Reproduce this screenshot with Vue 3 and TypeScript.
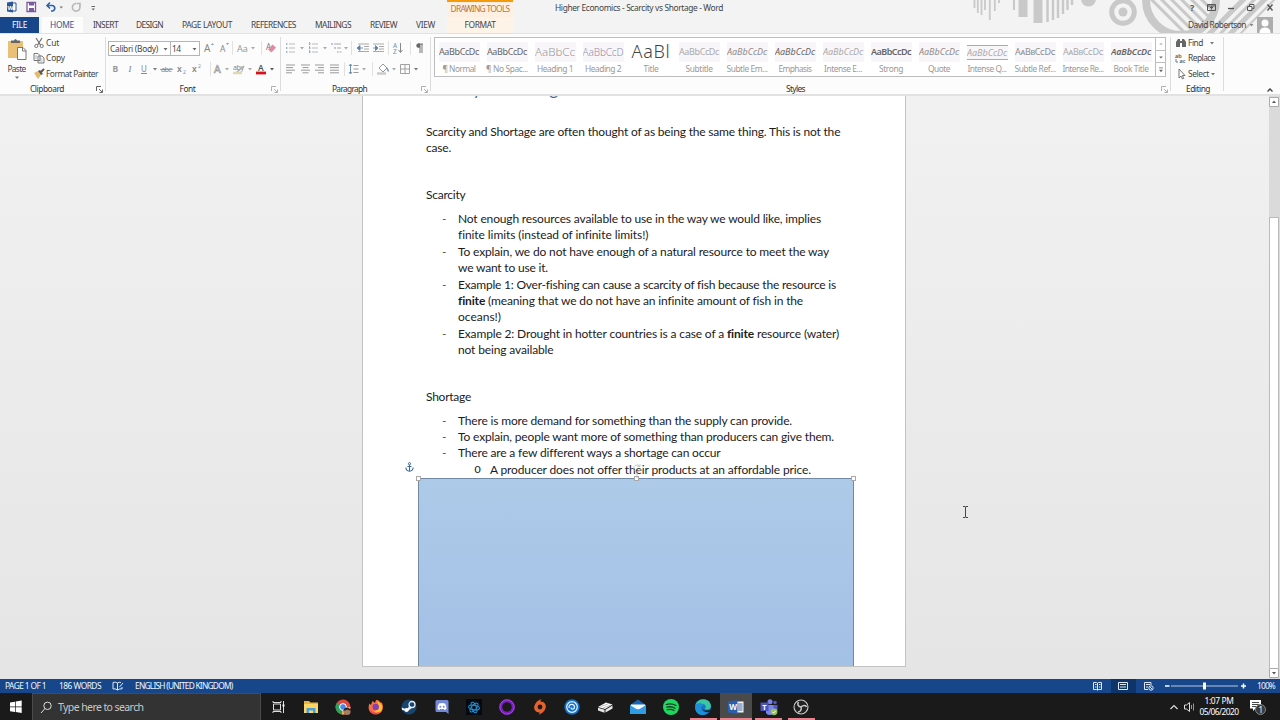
<script setup lang="ts">
// Word window: quick access bar, ribbon, document page, status bar and the desktop taskbar.
interface Cell { w: number; art: string }
interface Line { text: string; w: number }
interface Block { kind: 'para' | 'dash' | 'circle'; gap: number; lines: Line[] }

// Spreads a run of text over a fixed number of pixels through letter-spacing.
const vFit = {
  mounted(el: HTMLElement, { value }: { value: number }) {
    const count = (el.textContent || '').length
    const natural = el.getBoundingClientRect().width
    if (count) el.style.letterSpacing = `${(value - natural) / count}px`
  },
}

const arrow = (x: number, y = 7, c = '#777') => `<path d="M${x - 2} ${y - 1}h4l-2 2.4z" fill="${c}"/>`
const rows = (x: number, ws: number[], y = 3, c = '#999') =>
  ws.map((w, i) => `<path d="M${x} ${y + i * 2.6}h${w}" stroke="${c}"/>`).join('')
const sep = (x: number) => `<path d="M${x}.5 0v14" stroke="#e1e1e1"/>`

const tabs = [
  { name: 'FILE', w: 39, t: 15, cls: 'file' },
  { name: 'HOME', w: 46, t: 24, cls: 'active' },
  { name: 'INSERT', w: 41, t: 25, cls: '' },
  { name: 'DESIGN', w: 47, t: 27, cls: '' },
  { name: 'PAGE LAYOUT', w: 68, t: 50, cls: '' },
  { name: 'REFERENCES', w: 65, t: 45, cls: '' },
  { name: 'MAILINGS', w: 54, t: 36, cls: '' },
  { name: 'REVIEW', w: 47, t: 27, cls: '' },
  { name: 'VIEW', w: 37, t: 19, cls: '' },
]

const clipboard = [
  { name: 'Cut', w: 13, art: '<path d="M3 1l4.500 7M9 1L4.500 8" stroke="#666" stroke-width="1.1"/><circle cx="3.300" cy="9" r="1.600" stroke="#777"/><circle cx="8.700" cy="9" r="1.600" stroke="#777"/>' },
  { name: 'Copy', w: 19, art: '<path d="M1 1.500h4l2 2v5H1zM5 4h4l2 2v5H5z" fill="#fff" stroke="#777"/><path d="M6.500 7h3M6.500 9h3M2 4h2M2 6h2" stroke="#8a9db5" stroke-width=".8"/>' },
  { name: 'Format Painter', w: 52, art: '<path d="M1 5l4-2 3 4-3 4z" fill="#e4b969"/><path d="M5 3l2-1 3 4-2 1z" fill="#555"/><path d="M8 4l3-3" stroke="#555" stroke-width="2"/>' },
]

const fontTop: Cell[] = [
  { w: 14, art: '<text x="2" y="11" font-size="10" fill="#888">A</text><path d="M9 4l1.500-2L12 4z" fill="#7d9cc2"/>' },
  { w: 16, art: '<text x="4" y="11" font-size="8.500" fill="#888">A</text><path d="M10 2h3l-1.500 2z" fill="#7d9cc2"/>' },
  { w: 29, art: sep(0) + '<text x="5" y="10.500" font-size="9" fill="#999">Aa</text>' + arrow(21, 7, '#aaa') },
  { w: 20, art: sep(0) + '<text x="5" y="9" font-size="8" fill="#777">A</text><path d="M7 8.500l4.500-5 3.500 3-4.500 5z" fill="#e08ba5"/>' },
]
const fontBottom: Cell[] = [
  { w: 15, art: '<text x="4.500" y="10" font-size="8.500" font-weight="700" fill="#999">B</text>' },
  { w: 14, art: '<text x="5.500" y="10" font-size="8.500" font-style="italic" font-family="Liberation Serif, serif" fill="#777">I</text>' },
  { w: 23, art: '<text x="4" y="9.500" font-size="8" fill="#888">U</text><path d="M4 11.500h6" stroke="#888"/>' + arrow(18) },
  { w: 16, art: '<text x="1" y="10" font-size="7.500" textLength="11" fill="#888">abc</text><path d="M0 7.500h13" stroke="#888" stroke-width=".8"/>' },
  { w: 15, art: '<text x="1" y="10" font-size="8.500" font-weight="600" fill="#888">x</text><text x="7" y="12" font-size="5" fill="#6d8fb8">2</text>' },
  { w: 18, art: '<text x="1" y="10" font-size="8.500" font-weight="600" fill="#888">x</text><text x="7" y="6" font-size="5" fill="#6d8fb8">2</text>' },
  { w: 23, art: sep(1) + '<text x="5" y="11" font-size="10.500" fill="#fff" stroke="#999" stroke-width=".7">A</text>' + arrow(18, 7, '#aaa') },
  { w: 23, art: '<text x="1" y="8" font-size="7" textLength="11" fill="#888">aby</text><path d="M5 10l7-6" stroke="#aaa" stroke-width="1.500"/><path d="M1 11h9" stroke="#ddd8b8" stroke-width="2.500"/>' + arrow(18, 7, '#aaa') },
  { w: 22, art: '<text x="3" y="9" font-size="8.500" font-weight="600" fill="#555">A</text><path d="M1 11h10" stroke="#d8121c" stroke-width="2.800"/>' + arrow(17, 7, '#555') },
]
const bullets = (c: string) => [3, 7, 11].map((y) => `<path d="M1 ${y}h1.500" stroke="${c}" stroke-width="1.500"/><path d="M4 ${y}h6" stroke="#bbb"/>`).join('')
const paraTop: Cell[] = [
  { w: 23, art: bullets('#8aa4c6') + arrow(17, 7, '#aaa') },
  { w: 22, art: bullets('#7b96bb') + '<path d="M1.500 1v12" stroke="#9db0cb" stroke-dasharray="2 2"/>' + arrow(17, 7, '#aaa') },
  { w: 26, art: '<path d="M1 3h2M4 7h2M7 11h1.500" stroke="#7b96bb"/><path d="M4 3h7M7 7h4M9.500 11h2" stroke="#aaa"/>' + arrow(16, 7, '#aaa') + sep(21) },
  { w: 16, art: '<path d="M2 3h11M8 5.500h5M8 8h5M2 10.500h11" stroke="#aaa"/><path d="M1 7l3-2.500v5zM4 7h3" fill="#5d7fa8" stroke="#5d7fa8" stroke-width=".8"/>' },
  { w: 20, art: '<path d="M1 3h11M7 5.500h5M7 8h5M1 10.500h11" stroke="#aaa"/><path d="M6 7L3.500 4.500v5zM1 7h3" fill="#5d7fa8" stroke="#5d7fa8" stroke-width=".8"/>' + sep(16) },
  { w: 22, art: '<text x="1" y="6.500" font-size="6.500" fill="#7390b5">A</text><text x="1" y="13" font-size="6.500" fill="#888">Z</text><path d="M8.500 2v9M6.500 9l2 2.500 2-2.500" stroke="#888"/>' + sep(18) },
  { w: 12, art: '<path d="M8 3v9M6 3v9M4 3H9" stroke="#666" stroke-width=".9"/><path d="M6 2.600H4.300a2 2.100 0 0 0 0 4.200H6z" fill="#666"/>' },
]
const paraBottom: Cell[] = [
  { w: 15, art: rows(1, [9, 7, 9, 6]) },
  { w: 14, art: '<path d="M1 3h9M2.500 5.600h6M1 8.200h9M2.500 10.800h6" stroke="#999"/>' },
  { w: 15, art: '<path d="M1 3h9M4 5.600h6M1 8.200h9M4 10.800h6" stroke="#999"/>' },
  { w: 19, art: rows(1, [9, 9, 9, 9]) + sep(15) },
  { w: 29, art: '<path d="M2.500 2v10M1 4l1.500-2L4 4M1 10l1.500 2L4 10" stroke="#6d8fb8"/><path d="M5.500 3.500h5M5.500 7h5M5.500 10.500h5" stroke="#999"/>' + arrow(16, 7, '#aaa') + sep(24) },
  { w: 22, art: '<path d="M2 6l4-4 4 4-4 4z" fill="#fff" stroke="#999"/><path d="M10 6l1.500 3.500" stroke="#7a95b8" stroke-width="1.500"/><path d="M0 11.500h9" stroke="#ccc" stroke-width="2.500"/>' + arrow(17, 7, '#aaa') },
  { w: 22, art: '<path d="M1.500 2.500h9v9h-9zM6 2.500v9M1.500 7h9" stroke="#999" stroke-width=".9"/>' + arrow(17) },
]

const styles = [
  { name: '¶ Normal', cls: 'dark', w: 33 },
  { name: '¶ No Spac...', cls: 'dark', w: 42 },
  { name: 'Heading 1', cls: 'h1', w: 36 },
  { name: 'Heading 2', cls: 'h2', w: 36 },
  { name: 'Title', cls: 'title', w: 15 },
  { name: 'Subtitle', cls: 'light', w: 27 },
  { name: 'Subtle Em...', cls: 'it', w: 41 },
  { name: 'Emphasis', cls: 'it dark', w: 33 },
  { name: 'Intense E...', cls: 'it light', w: 38 },
  { name: 'Strong', cls: 'strong', w: 24 },
  { name: 'Quote', cls: 'it', w: 22 },
  { name: 'Intense Q...', cls: 'it light ruled', w: 39 },
  { name: 'Subtle Ref...', cls: 'caps', w: 41 },
  { name: 'Intense Re...', cls: 'caps light', w: 41 },
  { name: 'Book Title', cls: 'it strong', w: 35 },
]
const sampleOf = (cls: string) => {
  if (cls === 'title') return { text: 'AaBl', w: 39 }
  if (cls === 'h1') return { text: 'AaBbCc', w: 40 }
  if (cls === 'h2') return { text: 'AaBbCcD', w: 41 }
  return { text: 'AaBbCcDc', w: 40 }
}

const editing = [
  { name: 'Find', w: 15, more: 8, art: '<path d="M1 10V5l2-3h2v8zM7 10V2h2l2 3v5z" fill="#666"/><path d="M4 5h4" stroke="#666" stroke-width="2"/>' },
  { name: 'Replace', w: 27, more: 0, art: '<text x="0" y="5.500" font-size="5.500" font-weight="600" fill="#555">ab</text><text x="4.500" y="11" font-size="5.500" font-weight="600" fill="#555">ac</text><path d="M1 7v3h2" stroke="#5a7fae"/>' },
  { name: 'Select', w: 21, more: 3, art: '<path d="M4 1v9l2-2 1.500 3 1.200-.6L7.300 7.500H10z" fill="#fff" stroke="#666" stroke-width=".9"/>' },
]

const blocks: Block[] = [
  { kind: 'para', gap: 24, lines: [{ text: 'Scarcity and Shortage are often thought of as being the same thing. This is not the', w: 414 }, { text: 'case.', w: 25 }] },
  { kind: 'para', gap: 30.5, lines: [{ text: 'Scarcity', w: 39.5 }] },
  { kind: 'dash', gap: 7, lines: [{ text: 'Not enough resources available to use in the way we would like, implies', w: 363 }, { text: 'finite limits (instead of infinite limits!)', w: 190 }] },
  { kind: 'dash', gap: 0, lines: [{ text: 'To explain, we do not have enough of a natural resource to meet the way', w: 371 }, { text: 'we want to use it.', w: 90 }] },
  { kind: 'dash', gap: 0, lines: [{ text: 'Example 1: Over-fishing can cause a scarcity of fish because the resource is', w: 377.5 }, { text: '*finite* (meaning that we do not have an infinite amount of fish in the', w: 344.5 }, { text: 'oceans!)', w: 43 }] },
  { kind: 'dash', gap: 0, lines: [{ text: 'Example 2: Drought in hotter countries is a case of a *finite* resource (water)', w: 380.5 }, { text: 'not being available', w: 95.5 }] },
  { kind: 'para', gap: 30.4, lines: [{ text: 'Shortage', w: 45 }] },
  { kind: 'dash', gap: 7, lines: [{ text: 'There is more demand for something than the supply can provide.', w: 334 }] },
  { kind: 'dash', gap: 0, lines: [{ text: 'To explain, people want more of something than producers can give them.', w: 376 }] },
  { kind: 'dash', gap: 0, lines: [{ text: 'There are a few different ways a shortage can occur', w: 262 }] },
  { kind: 'circle', gap: 0, lines: [{ text: 'A producer does not offer their products at an affordable price.', w: 320 }] },
]

const apps = [
  { name: 'taskview', cls: '', art: '<path d="M3.500 5h7v6h-7zM3 2v1.500h8V2M3 14v-1.500h8V14M13.500 2v12" stroke="#ddd"/><path d="M12.500 6.500h2" stroke="#fff" stroke-width="2"/>' },
  { name: 'explorer', cls: '', art: '<path d="M1 2h5l1.500 1.500H15V14H1z" fill="#e9b53c"/><path d="M1 5h14v9H1z" fill="#fbd667"/><path d="M3.500 14V9h9v5h-2.500v-2.500H6V14z" fill="#4a9fd8"/>' },
  { name: 'chrome', cls: '', art: '<circle cx="8" cy="8" r="7.500" fill="#dd4b3e"/><path d="M8 8L1.500 4.300A7.500 7.500 0 0 0 7 15.400z" fill="#2ba25a"/><path d="M8 8h7.500A7.500 7.500 0 0 1 7 15.400z" fill="#f4c63d"/><circle cx="8" cy="8" r="3.400" fill="#4787ec" stroke="#fff"/><circle cx="12" cy="12.500" r="3.600" fill="#a77c62"/><path d="M8.400 12q.500-3.600 3.600-3.600t3.600 3.600l-3-1.500z" fill="#2d211c"/>' },
  { name: 'firefox', cls: '', art: '<path d="M8 1c3 0 4 2 4 2l2 1c2 4 1 11-6 11.500C2 15.500-1 10 1.500 4.500L3 6l1.500-4L7 4z" fill="#ff7139"/><path d="M9 .500c1 4 7 4 5 10-1.500 4-6 4-8 2l5-4z" fill="#ffbd30"/><circle cx="7.700" cy="8" r="3.200" fill="#8540b5"/><path d="M.800 7c1 7 8 8.500 12.200 5-4 5-11 4-12.200-5z" fill="#f72e62"/>' },
  { name: 'steam', cls: '', art: '<circle cx="8" cy="8" r="7.500" fill="#17456f"/><path d="M.700 8.500l5 2L9 6l3 2-5 4-6-1z" fill="#e8eef5"/><circle cx="11" cy="5.500" r="3" fill="#17456f" stroke="#e8eef5" stroke-width="1.300"/><circle cx="5.500" cy="11" r="2.100" fill="#fff"/>' },
  { name: 'discord', cls: '', art: '<path d="M3 1h10a1.500 1.500 0 0 1 1.500 1.500V15L12 13H3a1.500 1.500 0 0 1-1.500-1.500v-9A1.500 1.500 0 0 1 3 1z" fill="#7289da"/><path d="M5 4.500q3-1 6 0 2 3 1.500 5.500L10.500 11l-.7-1H6.200l-.7 1-2-1Q3 7.500 5 4.500z" fill="#fff"/><circle cx="6.300" cy="7.700" r="1" fill="#7289da"/><circle cx="9.700" cy="7.700" r="1" fill="#7289da"/>' },
  { name: 'battlenet', cls: '', art: '<path d="M0 0h16v16H0z" fill="#050a12"/><g stroke="#2493d6" stroke-width="1"><ellipse cx="8" cy="8.500" rx="5.500" ry="2.300" transform="rotate(10 8 8.500)"/><ellipse cx="8" cy="8.500" rx="5.500" ry="2.300" transform="rotate(70 8 8.500)"/><ellipse cx="8" cy="8.500" rx="5.500" ry="2.300" transform="rotate(130 8 8.500)"/></g>' },
  { name: 'ring', cls: '', art: '<circle cx="8" cy="8" r="6.300" stroke="#7b1fc2" stroke-width="3"/><circle cx="8" cy="8" r="7.200" stroke="#b453e8" stroke-width=".7"/>' },
  { name: 'origin', cls: '', art: '<path d="M9.500 0C8.500 1 8.300 2 8.500 2.600c4 0 6.300 3.600 5 7-1.200 3.400-4 5.200-7 6.400 1-1 1.200-2 1-2.600-4 0-6.300-3.600-5-7C3.700 3 6.500 1.200 9.500 0z" fill="#e9622b"/><circle cx="8" cy="8" r="2.400" fill="#1b1b1c"/>' },
  { name: 'uplay', cls: '', art: '<circle cx="8" cy="8" r="7.700" fill="#1170c8"/><circle cx="8" cy="8" r="5.300" stroke="#e9f5ff" stroke-width="1.200"/><path d="M5 9c-.5-5 5.500-4.500 5.500-1 0 2.500-3.500 3-3.500.5" stroke="#e9f5ff" stroke-width="1.200"/>' },
  { name: 'box', cls: '', art: '<path d="M1 8l8-4.500 6.500 2L8 10z" fill="#fff"/><path d="M1 8.700l6.500 2v3L1 11.500zM8.500 10.700L15.500 6.500v3l-7 4z" fill="#e5e5e5"/><path d="M3.500 7.700l8-3M6 9l8-3" stroke="#777" stroke-width=".5"/>' },
  { name: 'mail', cls: '', art: '<path d="M0 6l8-5.500L16 6v9H0z" fill="#1565b5"/><path d="M1 5.500h14v5H1z" fill="#f5f9ff"/><path d="M0 6l8 5 8-5v9H0z" fill="#2f9ce6"/>' },
  { name: 'spotify', cls: '', art: '<circle cx="8" cy="8" r="8" fill="#1ed760"/><path d="M3.300 5.500q5-1.500 9.700 1M3.800 8.200q4.500-1.200 8.200 1M4.300 10.700q4-.9 6.700.8" stroke="#17351f" stroke-width="1.300" stroke-linecap="round"/>' },
  { name: 'edge', cls: 'running', art: '<circle cx="8" cy="8" r="8" fill="#1a76c8"/><path d="M.500 6C2-1 15-2 16 7c0 3-3 4-6 3 2-3 0-5-3-5S1 6 .500 6z" fill="#3ac6a3"/><path d="M.200 7C2 3 8 3 8.500 6.500 5 7 5 13 11 13.500q2 0 3-.700C9 19-1 16 .200 7z" fill="#1b8fd8"/><path d="M8 7c-2 4 3 6 7.500 3.500L14 13c-5 1-8-3-6-6z" fill="#12202c"/>' },
  { name: 'word', cls: 'running current', art: '<path d="M8 2.500h7.500v11H8z" fill="#f2f6fc"/><path d="M10 5h4.500M10 7h4.500M10 9h4.500M10 11h4.500" stroke="#2b579a" stroke-width=".9"/><path d="M0 2.500L9.500 1v14L0 13.500z" fill="#2b5eae"/><text x="1.200" y="10.800" font-size="8" font-weight="700" fill="#fff">W</text>' },
  { name: 'teams', cls: 'running', art: '<circle cx="9" cy="2.800" r="2.500" fill="#7b83eb"/><circle cx="14" cy="3.500" r="1.800" fill="#5059c9"/><path d="M11 6h5.500v5a3 3 0 0 1-4 2z" fill="#5059c9"/><path d="M5 6h7.500v6a4 4 0 0 1-7.500 2z" fill="#7b83eb"/><path d="M-.500 3.500h8v8.500h-8z" fill="#4b53bc"/><text x="1.200" y="10.500" font-size="7.500" font-weight="700" fill="#fff">T</text><circle cx="13" cy="12.800" r="3.400" fill="#92c353"/><path d="M11.300 12.800l1.300 1.300 2.200-2.400" stroke="#fff"/>' },
  { name: 'obs', cls: 'running', art: '<circle cx="8" cy="8" r="7" fill="#222" stroke="#ccc" stroke-width="1.100"/><path d="M8 8C5 7.500 4 5 5.500 3M8 8c2-2 5-2 5.500 0M8 8c1 3-1 5-3 5" stroke="#ccc" stroke-width="1.500"/>' },
]
</script>

<template>
  <div class="window">
    <header class="top">
      <svg class="art" width="310" height="33" viewBox="970 0 310 33" fill="none">
        <g stroke="#c9c9c9">
          <path d="M974.500 0v8M977.800 0v13M981.500 0v15M985 0v10M989.800 0v20M994.800 0v11M999 0v3" stroke-width="1.800" />
          <path d="M1014 0v10" stroke-width="2" />
          <path d="M1023 0v17M1038 0v23" stroke-width="9" />
          <path d="M1047.500 0v22M1053 0v20M1058 0v18M1063 0v14M1067.500 0v10M1072 0v5" stroke-width="2.500" />
          <circle cx="1123" cy="12" r="11.300" stroke-width="5" />
          <circle cx="1181" cy="0" r="35" stroke-width="8" />
          <path d="M1150 -2l35 35M1158 -4l36 36M1167 -5l34 34M1177 -5l30 30M1187 -5l24 24M1197 -5l18 18" stroke-width="3" />
          <path d="M1207 36l40-40" stroke-width="5" />
          <path d="M1218 36l40-40" stroke-width="3" />
          <path d="M1228 36l40-40" stroke-width="5" />
          <path d="M1238 36l40-40" stroke-width="2" />
        </g>
        <circle cx="1088.500" cy="-1" r="7.500" fill="#c9c9c9" />
        <circle cx="1123" cy="12" r="4.500" fill="#c9c9c9" />
      </svg>

      <div class="titlebar">
        <svg class="quick" width="100" height="14" viewBox="0 0 100 14" fill="none">
          <path d="M11 3h5v8h-5z" fill="#fff" stroke="#2b579a" />
          <path d="M7 2.500L13 1.500v11L7 11.500z" fill="#2b579a" />
          <text x="7.500" y="9.500" font-size="6" font-weight="700" fill="#fff">W</text>
          <path d="M27 2.500h8.500v9H27z" fill="#fff" stroke="#7a5a9e" stroke-width="1.300" />
          <path d="M29 2.500h5v3h-5zM29 8h5v3h-5z" fill="#7a5a9e" />
          <path d="M47 5.500h5.500a2.800 2.800 0 0 1 0 5.500h-1.500M50 2.500l-3 3 3 3" stroke="#2f62a8" stroke-width="1.600" />
          <path d="M59.500 6.500h3.500l-1.750 2z" fill="#777" />
          <path d="M76 3.500a3.800 3.800 0 1 0 3.500 2M76.500 3.500H80V7" stroke="#b5b5b5" stroke-width="1.500" />
          <path d="M91.500 6.500h3.500" stroke="#666" />
          <path d="M91.500 8.500h3.500l-1.750 2z" fill="#666" />
        </svg>
        <div class="tools"><span v-fit="59">DRAWING TOOLS</span></div>
        <div class="caption"><span v-fit="168">Higher Economics - Scarcity vs Shortage - Word</span></div>
        <svg class="controls" width="92" height="15" viewBox="1188 0 92 15" fill="none" stroke="#555">
          <text x="1190" y="11" font-size="9" font-weight="700" fill="#555" stroke="none">?</text>
          <path d="M1207.500 4.500h8v6h-8zM1207.500 6h8M1211.500 9.500V6.500M1210 8l1.500-1.500L1213 8" />
          <path d="M1228 8.500h6" stroke-width="1.300" />
          <path d="M1247.500 6.500h4.500v4h-4.500zM1249.500 6V4.500h4.500v4h-1.500" />
          <path d="M1267.500 4.500l5 6M1272.500 4.500l-5 6" stroke-width="1.400" />
        </svg>
      </div>

      <nav class="tabs">
        <div v-for="t in tabs" :key="t.name" class="tab" :class="t.cls" :style="{ width: t.w + 'px' }">
          <span v-fit="t.t">{{ t.name }}</span>
        </div>
        <div class="tab format"><span v-fit="31">FORMAT</span></div>
        <div class="account">
          <span v-fit="58">David Robertson</span>
          <svg width="7" height="8" viewBox="0 0 7 8"><path d="M1.500 3h4l-2 2.400z" fill="#888" /></svg>
          <svg width="16" height="16" viewBox="0 0 16 16">
            <path d="M0 0h16v16H0z" fill="#adadad" />
            <circle cx="8" cy="6" r="3.500" fill="#fff" />
            <path d="M2.500 16q0-5.500 5.500-5.500t5.500 5.500z" fill="#fff" />
          </svg>
        </div>
      </nav>
    </header>

    <section class="ribbon">
      <div class="group clipboard">
        <div class="group-body">
          <div class="paste">
            <svg width="20" height="23" viewBox="0 0 20 23">
              <path d="M1 3h15v17H1z" fill="#eac078" />
              <path d="M4 5V2.500h3Q8.500-.500 10 2.500h3V5z" fill="#666" />
              <path d="M10.500 9.500h5.500l3 3v9h-8.500z" fill="#fff" stroke="#777" />
              <path d="M15.500 9.500v3.500h3.500" fill="none" stroke="#777" />
            </svg>
            <span v-fit="18">Paste</span>
            <svg width="8" height="7" viewBox="0 0 8 7"><path d="M2 2.500h4L4 5z" fill="#777" /></svg>
          </div>
          <div class="commands">
            <div v-for="c in clipboard" :key="c.name" class="command">
              <svg width="12" height="12" viewBox="0 0 12 12" fill="none" v-html="c.art"></svg>
              <span v-fit="c.w">{{ c.name }}</span>
            </div>
          </div>
        </div>
        <div class="group-name"><span v-fit="34">Clipboard</span></div>
        <svg class="launcher" width="7" height="7" viewBox="0 0 7 7"><path d="M.500 5V.500H5M3 3l3 3M6.500 3.500v3h-3" fill="none" /></svg>
      </div>

      <div class="group font">
        <div class="tool-row">
          <div class="combo family"><span v-fit="48">Calibri (Body)</span><svg width="7" height="6" viewBox="0 0 7 6"><path d="M1.500 2h4l-2 2.400z" fill="#666" /></svg></div>
          <div class="combo size"><span v-fit="8.500">14</span><svg width="7" height="6" viewBox="0 0 7 6"><path d="M1.500 2h4l-2 2.400z" fill="#666" /></svg></div>
          <svg v-for="(c, i) in fontTop" :key="i" :width="c.w" height="14" fill="none" v-html="c.art"></svg>
        </div>
        <div class="tool-row second">
          <svg v-for="(c, i) in fontBottom" :key="i" :width="c.w" height="14" fill="none" v-html="c.art"></svg>
        </div>
        <div class="group-name"><span v-fit="16">Font</span></div>
        <svg class="launcher faint" width="7" height="7" viewBox="0 0 7 7"><path d="M.500 5V.500H5M3 3l3 3M6.500 3.500v3h-3" fill="none" /></svg>
      </div>

      <div class="group paragraph">
        <div class="tool-row">
          <svg v-for="(c, i) in paraTop" :key="i" :width="c.w" height="14" fill="none" v-html="c.art"></svg>
        </div>
        <div class="tool-row second">
          <svg v-for="(c, i) in paraBottom" :key="i" :width="c.w" height="14" fill="none" v-html="c.art"></svg>
        </div>
        <div class="group-name"><span v-fit="35">Paragraph</span></div>
        <svg class="launcher faint" width="7" height="7" viewBox="0 0 7 7"><path d="M.500 5V.500H5M3 3l3 3M6.500 3.500v3h-3" fill="none" /></svg>
      </div>

      <div class="group styles">
        <div class="gallery">
          <div v-for="s in styles" :key="s.name" class="style">
            <div class="sample" :class="s.cls"><span v-fit="sampleOf(s.cls).w">{{ sampleOf(s.cls).text }}</span></div>
            <div class="style-name"><span v-fit="s.w">{{ s.name }}</span></div>
          </div>
          <div class="gallery-scroll">
            <svg viewBox="0 0 10 13"><path d="M3 7.500h4L5 5z" fill="#bbb" /></svg>
            <svg viewBox="0 0 10 13"><path d="M3 6h4L5 8.500z" fill="#666" /></svg>
            <svg viewBox="0 0 10 13"><path d="M3 4.500h4v1H3zM3 7h4L5 9.500z" fill="#666" /></svg>
          </div>
        </div>
        <div class="group-name"><span v-fit="19">Styles</span></div>
        <svg class="launcher faint" width="7" height="7" viewBox="0 0 7 7"><path d="M.500 5V.500H5M3 3l3 3M6.500 3.500v3h-3" fill="none" /></svg>
      </div>

      <div class="group editing">
        <div class="commands">
          <div v-for="e in editing" :key="e.name" class="command">
            <svg width="12" height="12" viewBox="0 0 12 12" fill="none" v-html="e.art"></svg>
            <span v-fit="e.w">{{ e.name }}</span>
            <svg v-if="e.more" class="more" :width="e.more + 4" height="6"><path :d="`M${e.more - 2} 2h4l-2 2.400z`" fill="#777" /></svg>
          </div>
        </div>
        <div class="group-name"><span v-fit="24">Editing</span></div>
      </div>
      <svg class="collapse" width="8" height="6" viewBox="0 0 8 6"><path d="M1.500 4.500L4 2l2.500 2.500" fill="none" stroke="#444" stroke-width="1.400" /></svg>
    </section>

    <main class="workspace">
      <article class="page">
        <h1><span v-fit="140">Scarcity vs Shortage</span></h1>
        <div v-for="(b, i) in blocks" :key="i" class="block" :class="b.kind" :style="{ marginTop: b.gap + 'px' }">
          <i v-if="b.kind === 'dash'" class="mark">-</i>
          <i v-if="b.kind === 'circle'" class="mark">o</i>
          <div>
            <p v-for="l in b.lines" :key="l.text">
              <span v-fit="l.w"><template v-for="(part, k) in l.text.split('*')" :key="k"><b v-if="k % 2">{{ part }}</b><template v-else>{{ part }}</template></template></span>
            </p>
          </div>
        </div>
        <svg class="anchor" width="9" height="10" viewBox="0 0 9 10" fill="none" stroke="#3e6996">
          <circle cx="4.500" cy="1.700" r="1.100" />
          <path d="M4.500 3v6M2.500 4.500h4M.800 5.500q.300 3.500 3.700 3.700 3.400-.200 3.700-3.700" stroke-width="1.100" />
        </svg>
        <div class="shape">
          <i class="handle left"></i>
          <i class="handle mid"></i>
          <i class="handle right"></i>
          <svg class="rotate" width="10" height="16" viewBox="0 0 10 16" fill="none" stroke="#b5b5b5"><path d="M7.500 3A3.500 3.500 0 1 0 8.500 6M8 1v2.500H5.500M5 9.500V15" /></svg>
        </div>
      </article>
      <svg class="cursor" width="7" height="12" viewBox="0 0 7 12" fill="none" stroke="#444"><path d="M1 .500h2l.500.500.500-.500h2M3.500 1v10M1 11.500h2l.500-.500.500.500h2" /></svg>
      <div class="scrollbar">
        <svg width="10" height="10" viewBox="0 0 10 10"><path d="M.500.500h9v9h-9z" fill="#fff" stroke="#aaa" /><path d="M3 6h4L5 3.500z" fill="#555" /></svg>
        <div class="thumb"></div>
        <svg width="10" height="10" viewBox="0 0 10 10"><path d="M.500.500h9v9h-9z" fill="#fff" stroke="#aaa" /><path d="M3 4h4L5 6.500z" fill="#555" /></svg>
      </div>
    </main>

    <footer class="status">
      <span v-fit="41" class="pages">PAGE 1 OF 1</span>
      <span v-fit="42" class="words">186 WORDS</span>
      <svg width="12" height="10" viewBox="0 0 12 10" fill="none" stroke="#dfe8f5"><path d="M5.500 2v7M5.500 2Q3 .500 1 1.500v6.500q2-.800 4.500 1Q8 7.200 10 8V6M5.500 2Q7 .800 9 1.500M7.500 6l3.500-4" /></svg>
      <span v-fit="97.5" class="lang">ENGLISH (UNITED KINGDOM)</span>
      <div class="views">
        <svg width="27" height="14" viewBox="0 0 27 14" fill="none" stroke="#dfe8f5"><path d="M13.500 4v7M9.500 3.500h3l1 .7 1-.7h3v7h-3l-1 .7-1-.7h-3zM11 5.500h1.500M11 8h1.500M15 5.500h1.500M15 8h1.500" /></svg>
        <svg class="selected" width="25" height="14" viewBox="0 0 25 14" fill="none" stroke="#dfe8f5"><path d="M7.500 3.500h9v7h-9zM9 5.500h6M9 8h6" /></svg>
        <svg width="27" height="14" viewBox="0 0 27 14" fill="none" stroke="#dfe8f5"><path d="M15 6V3.500H8.500v7H12M10 5.500h4M10 8h2" /><circle cx="15" cy="9" r="2.200" /><path d="M13.500 7.500l3 3" /></svg>
        <svg width="88" height="14" viewBox="0 0 88 14" fill="none" stroke="#fff"><path d="M2 7h4.500M78 7h5M80.500 4.500v5" stroke-width="1.500" /><path d="M8 7h67" stroke="#b9c9e0" /><path d="M41.500 3.500v7" stroke-width="3" /></svg>
        <span v-fit="18" class="zoom">100%</span>
      </div>
    </footer>

    <footer class="taskbar">
      <svg class="start" width="32" height="27" viewBox="0 0 32 27" fill="#fff"><path d="M10 9.500l5-.8v4.800h-5zM15.700 8.600l6-1v5.900h-6zM10 14.200h5V19l-5-.8zM15.700 14.200h6v5.900l-6-1z" /></svg>
      <div class="search">
        <svg width="13" height="13" viewBox="0 0 13 13" fill="none" stroke="#ddd"><circle cx="7.500" cy="4.800" r="3.700" /><path d="M5 7.500L1 12" /></svg>
        <span v-fit="85.5">Type here to search</span>
      </div>
      <div class="apps">
        <div v-for="a in apps" :key="a.name" class="app" :class="a.cls"><svg width="16" height="16" viewBox="0 0 16 16" fill="none" v-html="a.art"></svg></div>
      </div>
      <div class="tray">
        <svg width="30" height="16" viewBox="0 0 30 16" fill="none" stroke="#ddd"><path d="M3.500 10L7 6.500l3.500 3.500" stroke-width="1.200" /><path d="M17.500 6v4h2l3 2.500v-9l-3 2.500z" /><path d="M24.500 6v4M26.500 4.500v7" stroke="#999" /></svg>
        <div class="clock"><span v-fit="29">1:07 PM</span><span v-fit="39">05/06/2020</span></div>
        <svg width="20" height="20" viewBox="0 0 20 20"><path d="M2 3h11v8.500H7.500L5 14v-2.500H2z" fill="#fff" /><path d="M4 5.500h7M4 7.500h7M4 9.500h4" stroke="#333" stroke-width=".9" /><circle cx="12.500" cy="12.500" r="5" fill="#3a3a3a" stroke="#888" /><text x="10.500" y="15.500" font-size="8" fill="#fff">1</text></svg>
      </div>
    </footer>
  </div>
</template>

<style>
body { margin: 0; overflow: hidden; }
</style>

<style scoped>
.window {
  width: 1280px; height: 720px;
  display: flex; flex-direction: column;
  overflow: hidden;
  font-family: "Noto Sans", "Open Sans", sans-serif;
  font-size: 8.4px; line-height: 10px;
  color: #444;
  background: #f3f3f3;
}
svg { display: block; flex: none; }
span { display: inline-block; white-space: nowrap; flex: none; }

.top { position: relative; height: 33px; flex: none; background: #f3f3f3; }
.art { position: absolute; right: 0; top: 0; }
.titlebar { position: relative; display: flex; height: 17px; }
.quick { width: 100px; }
.tools {
  width: 66px; margin-left: 347px; padding-bottom: 1px;
  border-top: 2.5px solid #f59a0c; box-sizing: border-box;
  background: #fdf0e2; color: #bb7440;
  display: flex; justify-content: center; align-items: center;
}
.caption { margin-left: 42px; padding-top: 3px; flex: 1; }
.tabs { position: relative; display: flex; height: 16px; }
.tab { display: flex; justify-content: center; align-items: center; flex: none; box-sizing: border-box; padding-bottom: 1px; }
.tab.file { background: #17468b; color: #fff; }
.tab.active { color: #2b579a; background: linear-gradient(#fcfcfc, #fcfcfc) 3px 0 / 41px 17px no-repeat; }
.tab.format { width: 66px; margin-left: 3px; background: #fdf3e7; }
.account { margin-left: auto; display: flex; align-items: center; gap: 2px; padding-right: 7px; }
.account span { padding-bottom: 1px; }

.ribbon {
  position: relative; display: flex; flex: none;
  height: 63px; box-sizing: border-box;
  background: #fcfcfc;
  border-top: 1px solid #e2e2e2; border-bottom: 2px solid #e2e2e2;
}
.group { position: relative; display: flex; flex-direction: column; flex: none; box-sizing: border-box; padding-top: 7px; }
.group::after { content: ''; position: absolute; right: 0; top: 3px; width: 1px; height: 54px; background: #dcdcdc; }
.group-name { margin-top: auto; height: 10px; display: flex; justify-content: center; color: #333; }
.launcher { position: absolute; right: 3px; bottom: 1px; stroke: #666; }
.launcher.faint { stroke: #b0b0b0; }
.clipboard { width: 106px; padding-top: 3px; }
.clipboard .group-name { padding-right: 12px; }
.group-body { display: flex; }
.paste { width: 33px; display: flex; flex-direction: column; align-items: center; padding-top: 1px; }
.paste span { margin-top: 3px; }
.commands { display: flex; flex-direction: column; gap: 3.3px; }
.command { display: flex; align-items: center; height: 12px; gap: 1px; }
.font { width: 175px; }
.font .group-name { padding-right: 12px; }
.tool-row { display: flex; height: 14px; padding-left: 2px; }
.tool-row.second { margin-top: 7px; }
.combo {
  display: flex; align-items: center; justify-content: space-between;
  box-sizing: border-box; height: 15px; padding: 0 1px;
  border: 1px solid #b5b5b5; background: #fff;
}
.family { width: 63px; }
.size { width: 29px; border-left: none; margin-right: 2px; }
.paragraph { width: 150px; }
.paragraph .tool-row { padding-left: 4px; }
.paragraph .group-name { padding-right: 13px; }
.styles { width: 740px; padding: 3px 0 0 3px; }
.styles .group-name { padding-right: 14px; }
.gallery { display: flex; box-sizing: border-box; width: 732px; height: 40px; border: 1px solid #bdbdbd; background: #fff; }
.style { width: 48px; display: flex; flex-direction: column; align-items: center; flex: none; }
.sample {
  width: 41px; height: 20px; margin-top: 4px; overflow: hidden;
  display: flex; align-items: center; justify-content: center;
  background: #f9f6f9; color: #8d8d8d; font-size: 9px;
}
.sample.dark { color: #666; }
.sample.light { color: #aaa; }
.sample.h1 { font-size: 11.5px; font-weight: 300; color: #999; }
.sample.h2 { font-size: 10px; font-weight: 300; color: #8f90ad; }
.sample.title { font-size: 18px; line-height: 20px; font-weight: 300; color: #444; background: none; padding-bottom: 3px; height: 17px; }
.sample.it { font-style: italic; }
.sample.strong { font-weight: 600; color: #666; }
.sample.caps { font-variant: small-caps; }
.sample.ruled { height: 13px; margin: 7px 0 2px; border-top: 1px solid #aaa; border-bottom: 1px solid #aaa; }
.style-name { height: 10px; margin-top: 2px; color: #999; }
.gallery-scroll { display: flex; flex-direction: column; width: 10px; border-left: 1px solid #bdbdbd; }
.gallery-scroll svg { width: 10px; height: 12.67px; box-sizing: border-box; border-bottom: 1px solid #bdbdbd; }
.gallery-scroll svg:last-child { border-bottom: none; }
.editing { width: 53px; padding: 3px 0 0 4px; }
.editing .group-name { padding-right: 3px; }
.collapse { margin: auto 6px 1px auto; }

.workspace { position: relative; display: flex; justify-content: center; height: 583px; flex: none; background: linear-gradient(#f1f1f1, #e5e5e5); }
.page {
  position: relative; box-sizing: border-box;
  width: 544px; height: 571px; margin-right: 12px; padding: 0 0 0 63px;
  background: #fff; border: 1px solid #c3c3c3; border-top: none;
  overflow: hidden;
  font-family: Lato, "Open Sans", sans-serif; font-size: 12px; line-height: 16.45px; color: #1c1c1c;
}
h1 { margin: -18px 0 0; height: 22px; line-height: 22px; font-size: 17px; font-weight: 400; color: #3c6894; }
.block { display: flex; }
.block p { margin: 0; height: 16.45px; }
.mark { font-style: normal; flex: none; }
.dash .mark { width: 16px; padding-left: 16px; color: #555; }
.circle .mark { width: 16px; padding-left: 48px; font-family: "Liberation Mono", monospace; font-size: 12px; }
.anchor { position: absolute; left: 42px; top: 366px; }
.shape {
  position: absolute; left: 55px; top: 382px;
  width: 436px; height: 190px; box-sizing: border-box;
  border: 1px solid #7289a5; border-bottom: none;
  background: linear-gradient(#aecae9, #a3c0e5);
}
.handle { position: absolute; top: -3px; width: 3px; height: 3px; border: 1px solid #a9a9a9; background: #fff; }
.handle.left { left: -3px; }
.handle.mid { left: 215px; }
.handle.right { right: -3px; }
.rotate { position: absolute; left: 213px; top: -16px; opacity: .8; }
.cursor { position: absolute; left: 962px; top: 410px; }
.scrollbar {
  position: absolute; right: 0; top: 0; bottom: 0; width: 11px;
  display: flex; flex-direction: column; padding-top: 1px; box-sizing: border-box;
  background: #dadada;
}
.thumb { flex: 1; margin-top: 110px; width: 8px; border: 1px solid #bbb; border-bottom: none; background: #fff; }
.scrollbar svg:last-child { margin-bottom: 1px; }

.status { display: flex; align-items: center; height: 14px; flex: none; padding-left: 5px; background: #17468b; color: #f1f5fb; }
.status span { padding-bottom: 1px; }
.words { margin: 0 11px 0 13px; }
.lang { margin-left: 11px; }
.views { margin-left: auto; display: flex; align-items: center; }
.selected { background: #0e3469; }
.zoom { margin: 0 5px 0 6px; }

.taskbar { display: flex; height: 27px; flex: none; background: #1a1a1b; color: #fff; }
.search {
  display: flex; align-items: center; gap: 5px;
  box-sizing: border-box; width: 229px; padding-left: 7px;
  background: #333; border: 1px solid #4a4a4a; border-bottom: none;
  font-size: 10.5px; color: #c8c8c8;
}
.apps { display: flex; padding-left: .6px; }
.app {
  position: relative; width: 32.72px; height: 27px;
  display: flex; align-items: center; justify-content: center;
}
.app.current { background: #4a4a4b; }
.app svg { overflow: visible; }
.app.running::after { content: ''; position: absolute; left: 3px; right: 3px; bottom: 0; height: 2px; background: #e8838f; }
.app.current::after { left: 0; right: 0; }
.tray { display: flex; align-items: center; margin-left: auto; padding-right: 12px; }
.clock { width: 42px; margin: 0 8px 0 1px; display: flex; flex-direction: column; align-items: center; gap: 1.5px; }
</style>
